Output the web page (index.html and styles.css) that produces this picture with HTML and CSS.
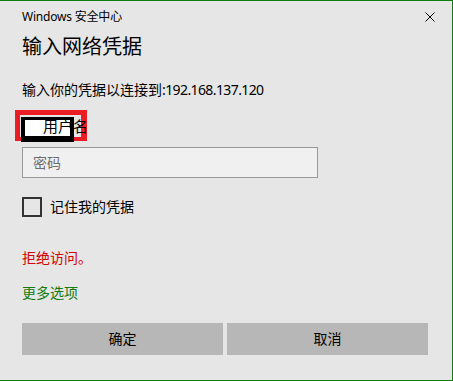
FILE: index.html
```html
<!DOCTYPE html>
<html>
    <head>
        <title>Windows 安全中心</title>
        <link rel="stylesheet" href="styles.css">
    </head>
    <body>
        <div class="dialog">
            <div class="titlebar">
                <span class="app">Windows 安全中心</span>
                <span class="close">
                    <svg width="10" height="10" viewBox="0 0 10 10">
                        <path d="M0.5 0.5 L9.5 9.5 M9.5 0.5 L0.5 9.5" stroke="#000" stroke-width="1" fill="none"/>
                    </svg>
                </span>
            </div>
            <h1>输入网络凭据</h1>
            <p class="prompt">输入你的凭据以连接到<span class="ip">:192.168.137.120</span></p>
            <div class="user-field">
                <span class="user-mask"></span>
                <span class="user-text">用户名</span>
                <span class="user-frame"></span>
            </div>
            <div class="pw-input">密码</div>
            <div class="remember">
                <span class="box"></span>
                <span>记住我的凭据</span>
            </div>
            <p class="error">拒绝访问。</p>
            <a class="more">更多选项</a>
            <div class="buttons">
                <span class="btn">确定</span>
                <span class="btn">取消</span>
            </div>
        </div>
    </body>
</html>
```

FILE: styles.css
```css
html, body {
    margin:0;
    background:#e6e6e6;
}
body {
    font:14px/20px 'Noto Sans', 'Noto Sans CJK SC', sans-serif;
    color:#000;
}
.dialog {
    box-sizing:border-box;
    width:453px;
    height:381px;
    border-top:1px solid #107c10;
    border-right:1px solid #107c10;
    border-bottom:1px solid #107c10;
    padding:0 24px 0 22px;
    display:flex;
    flex-direction:column;
    align-items:flex-start;
}
.titlebar {
    align-self:stretch;
    height:32px;
    display:flex;
    align-items:center;
    justify-content:space-between;
}
.app {
    font-size:12px;
    line-height:16px;
    letter-spacing:-0.2px;
}
.close {
    display:flex;
    margin-right:-7px;
    margin-top:-1px;
}
h1 {
    margin:0;
    font-weight:normal;
    font-size:20px;
    line-height:28px;
}
.prompt {
    margin:19px 0 0;
}
.ip {
    letter-spacing:-0.6px;
}
.user-field {
    position:relative;
    box-sizing:border-box;
    width:72px;
    height:31px;
    margin:10px 0 0 -7px;
    border:5px solid #ec1c24;
    border-right-width:6px;
    border-bottom-width:4px;
}
.user-mask {
    position:absolute;
    left:1px;
    top:2px;
    width:53px;
    height:25px;
    background:#fff;
}
.user-text {
    position:absolute;
    left:23px;
    top:1px;
    font-size:15px;
    line-height:21px;
    white-space:nowrap;
}
.user-frame {
    position:absolute;
    box-sizing:border-box;
    left:1px;
    top:2px;
    width:53px;
    height:25px;
    border:4px solid #000;
    border-top-width:3px;
    border-bottom-width:6px;
}
.pw-input {
    box-sizing:border-box;
    width:296px;
    height:31px;
    margin-top:6px;
    padding:0 10px;
    border:1px solid #999;
    background:#f0f0f0;
    color:#6d6d6d;
    line-height:29px;
}
.remember {
    display:flex;
    align-items:center;
    gap:8px;
    margin-top:19px;
}
.box {
    box-sizing:border-box;
    width:20px;
    height:20px;
    border:2px solid #333;
}
.error {
    margin:31px 0 0;
    color:#d40000;
}
.more {
    margin-top:15px;
    color:#107c10;
}
.buttons {
    align-self:stretch;
    display:grid;
    grid-template-columns:1fr 1fr;
    gap:4px;
    margin-top:20px;
}
.btn {
    height:32px;
    line-height:32px;
    text-align:center;
    background:#b7b7b7;
}
```
